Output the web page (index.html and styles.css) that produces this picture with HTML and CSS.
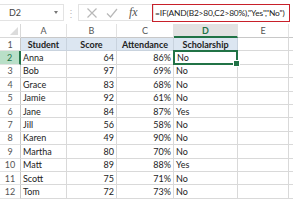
FILE: index.html
```html
<!DOCTYPE html>
<html lang="en">
  <head>
    <meta charset="UTF-8" />
    <title>Scholarship sheet</title>
    <link rel="stylesheet" href="styles.css">
  </head>
  <body>
    <div class="formula-bar">
      <div class="name-box">
        <span>D2</span>
        <span class="caret"></span>
      </div>
      <span class="grip">⋮</span>
      <div class="tools">
        <svg width="12" height="12" viewBox="0 0 12 12"><path d="M1.5 1.5 L10.5 10.5 M10.5 1.5 L1.5 10.5" stroke="#b8b8b8" stroke-width="1.2" fill="none"/></svg>
        <svg width="12" height="12" viewBox="0 0 12 12"><path d="M1 6.5 L4.5 10 L11 2" stroke="#b8b8b8" stroke-width="1.2" fill="none"/></svg>
        <span class="fx">fx</span>
      </div>
      <div class="formula">=IF(AND(B2&gt;80,C2&gt;80%),"Yes","No")</div>
    </div>

    <div class="sheet">
      <div class="corner"><span class="tri"></span></div>
      <div class="col-head">A</div>
      <div class="col-head">B</div>
      <div class="col-head">C</div>
      <div class="col-head active">D</div>
      <div class="col-head">E</div>
      <div class="col-head"></div>

      <div class="row-head">1</div>
      <div class="cell title">Student</div>
      <div class="cell title">Score</div>
      <div class="cell title">Attendance</div>
      <div class="cell title">Scholarship</div>
      <div class="cell"></div>
      <div class="cell"></div>

      <div class="row-head active">2</div>
      <div class="cell">Anna</div>
      <div class="cell num">64</div>
      <div class="cell num">86%</div>
      <div class="cell selected">No<span class="handle"></span></div>
      <div class="cell"></div>
      <div class="cell"></div>

      <div class="row-head">3</div>
      <div class="cell">Bob</div>
      <div class="cell num">97</div>
      <div class="cell num">69%</div>
      <div class="cell">No</div>
      <div class="cell"></div>
      <div class="cell"></div>

      <div class="row-head">4</div>
      <div class="cell">Grace</div>
      <div class="cell num">83</div>
      <div class="cell num">68%</div>
      <div class="cell">No</div>
      <div class="cell"></div>
      <div class="cell"></div>

      <div class="row-head">5</div>
      <div class="cell">Jamie</div>
      <div class="cell num">92</div>
      <div class="cell num">61%</div>
      <div class="cell">No</div>
      <div class="cell"></div>
      <div class="cell"></div>

      <div class="row-head">6</div>
      <div class="cell">Jane</div>
      <div class="cell num">84</div>
      <div class="cell num">87%</div>
      <div class="cell">Yes</div>
      <div class="cell"></div>
      <div class="cell"></div>

      <div class="row-head">7</div>
      <div class="cell">Jill</div>
      <div class="cell num">56</div>
      <div class="cell num">58%</div>
      <div class="cell">No</div>
      <div class="cell"></div>
      <div class="cell"></div>

      <div class="row-head">8</div>
      <div class="cell">Karen</div>
      <div class="cell num">49</div>
      <div class="cell num">90%</div>
      <div class="cell">No</div>
      <div class="cell"></div>
      <div class="cell"></div>

      <div class="row-head">9</div>
      <div class="cell">Martha</div>
      <div class="cell num">80</div>
      <div class="cell num">70%</div>
      <div class="cell">No</div>
      <div class="cell"></div>
      <div class="cell"></div>

      <div class="row-head">10</div>
      <div class="cell">Matt</div>
      <div class="cell num">89</div>
      <div class="cell num">88%</div>
      <div class="cell">Yes</div>
      <div class="cell"></div>
      <div class="cell"></div>

      <div class="row-head">11</div>
      <div class="cell">Scott</div>
      <div class="cell num">75</div>
      <div class="cell num">71%</div>
      <div class="cell">No</div>
      <div class="cell"></div>
      <div class="cell"></div>

      <div class="row-head">12</div>
      <div class="cell">Tom</div>
      <div class="cell num">72</div>
      <div class="cell num">73%</div>
      <div class="cell">No</div>
      <div class="cell"></div>
      <div class="cell"></div>
    </div>
  </body>
</html>
```

FILE: styles.css
```css
body {
  margin: 0;
  background-color: white;
  font-family: Lato, "Liberation Sans", sans-serif;
  font-size: 9px;
  color: #222;
  overflow: hidden;
}
.formula-bar {
  display: flex;
  align-items: center;
  height: 24px;
  box-sizing: border-box;
  padding: 3px 3px 2px 0;
}
.name-box {
  display: flex;
  align-items: center;
  justify-content: space-between;
  width: 64px;
  height: 17px;
  box-sizing: border-box;
  border: 1px solid #e3e3e3;
  border-left: none;
  padding: 0 5px 0 9px;
  color: #444;
}
.caret {
  width: 0;
  height: 0;
  border-left: 2px solid transparent;
  border-right: 2px solid transparent;
  border-top: 3px solid #777;
}
.grip {
  width: 14px;
  text-align: center;
  color: #bbb;
  font-size: 10px;
}
.tools {
  display: flex;
  align-items: center;
  gap: 8px;
  height: 17px;
  box-sizing: border-box;
  border: 1px solid #e3e3e3;
  padding: 0 4px 0 7px;
  width: 76px;
}
.fx {
  font-family: "Liberation Serif", serif;
  font-style: italic;
  font-size: 12px;
  color: #555;
  margin-left: 3px;
}
.formula {
  flex: 1;
  height: 18px;
  box-sizing: border-box;
  border: 1.5px solid #c8202a;
  margin-left: -2px;
  padding: 0 2px;
  display: flex;
  align-items: center;
  white-space: nowrap;
  overflow: hidden;
  font-size: 8.4px;
  letter-spacing: -0.15px;
  color: #222;
}
.sheet {
  display: grid;
  grid-template-columns: 21px 46px 50px 57px 64px 51px 1fr;
  grid-template-rows: 14px repeat(12, 13.4px);
}
.sheet > div {
  box-sizing: border-box;
  border-right: 1px solid #d9d9d9;
  border-bottom: 1px solid #d9d9d9;
  white-space: nowrap;
  overflow: hidden;
  display: flex;
  align-items: center;
}
.corner {
  background-color: #fff;
  position: relative;
}
.tri {
  position: absolute;
  right: 2px;
  bottom: 2px;
  width: 0;
  height: 0;
  border-left: 8px solid transparent;
  border-bottom: 8px solid #dcdcdc;
}
.sheet > .col-head {
  justify-content: center;
  color: #555;
  border-right-color: #e2e2e2;
  border-bottom-color: #c8c8c8;
}
.sheet > .col-head.active {
  background-color: #e2e2e2;
  color: #217346;
  font-weight: bold;
  border-bottom: 2px solid #217346;
}
.sheet > .row-head {
  justify-content: center;
  color: #555;
  border-right-color: #c8c8c8;
  border-bottom-color: #e2e2e2;
}
.sheet > .row-head.active {
  background-color: #b9dfc8;
  color: #217346;
  border-right: 2px solid #217346;
}
.cell {
  padding: 0 2px;
}
.sheet > .title {
  background-color: #dce6f1;
  font-weight: bold;
  justify-content: center;
  border-right-color: #c9d3de;
  border-bottom-color: #c9d3de;
}
.num {
  justify-content: flex-end;
}
.sheet > .selected {
  position: relative;
  overflow: visible;
  border: 2px solid #217346;
  margin: -1px 0 0 -1px;
  padding-left: 2px;
}
.handle {
  position: absolute;
  right: -4px;
  bottom: -4px;
  width: 5px;
  height: 5px;
  background-color: #217346;
  border: 1px solid white;
}
```
